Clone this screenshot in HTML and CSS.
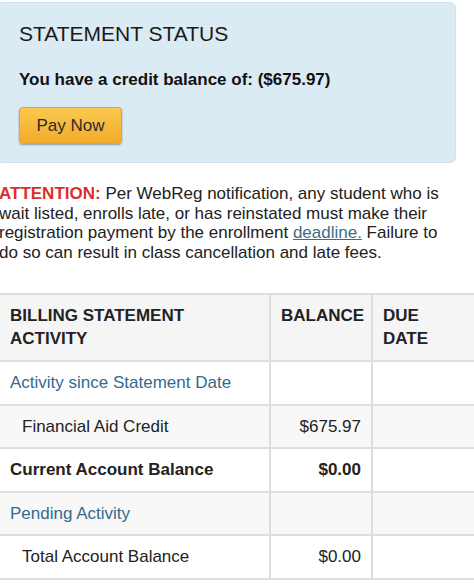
FILE: index.html
```html
<!DOCTYPE html>
<html>

<head>
	<meta charset="UTF-8">
	<title>Statement</title>
	<link rel="stylesheet" href="styles.css">
</head>

<body>
	<div class="status-box">
		<h2 class="status-title">STATEMENT STATUS</h2>
		<p class="credit">You have a credit balance of: ($675.97)</p>
		<button type="button" class="pay-button">Pay Now</button>
	</div>

	<p class="notice">
		<span class="attention">ATTENTION:</span> Per WebReg notification, any student who is
		wait listed, enrolls late, or has reinstated must make their registration payment by
		the enrollment <a href="#">deadline.</a> Failure to do so can result in class
		cancellation and late fees.
	</p>

	<table class="billing">
		<thead>
			<tr>
				<th class="col-activity">BILLING STATEMENT ACTIVITY</th>
				<th class="col-balance">BALANCE</th>
				<th class="col-due">DUE DATE</th>
			</tr>
		</thead>
		<tbody>
			<tr>
				<td class="section">Activity since Statement Date</td>
				<td></td>
				<td></td>
			</tr>
			<tr class="shaded">
				<td class="item">Financial Aid Credit</td>
				<td class="amount">$675.97</td>
				<td></td>
			</tr>
			<tr>
				<td class="total">Current Account Balance</td>
				<td class="amount total">$0.00</td>
				<td></td>
			</tr>
			<tr class="shaded">
				<td class="section">Pending Activity</td>
				<td></td>
				<td></td>
			</tr>
			<tr>
				<td class="item">Total Account Balance</td>
				<td class="amount">$0.00</td>
				<td></td>
			</tr>
		</tbody>
	</table>
</body>

</html>
```

FILE: styles.css
```css
body {
	margin: 0;
	padding-top: 2px;
	font-family: "Liberation Sans", Arial, sans-serif;
	font-size: 17px;
	color: #222;
	overflow: hidden;
}

.status-box {
	width: 436px;
	margin-left: -4px;
	padding: 17px 0 18px 22px;
	background-color: #dbebf4;
	border: 1px solid #cde0eb;
	border-radius: 6px;
}

.status-title {
	margin: 0;
	font-size: 21px;
	font-weight: normal;
	color: #1a1a1a;
	line-height: 28px;
}

.credit {
	margin: 21px 0 0;
	font-weight: bold;
	font-size: 17px;
	color: #111;
	line-height: 22px;
}

.pay-button {
	margin-top: 16px;
	width: 103px;
	height: 37px;
	font-family: "Liberation Sans", Arial, sans-serif;
	font-size: 17px;
	color: #2b2b2b;
	background: linear-gradient(#fbc94f, #f2aa2a);
	border: 1px solid #e6a22c;
	border-radius: 4px;
	box-shadow: 0 1px 2px rgba(0, 0, 0, 0.35);
}

.notice {
	margin: 21px 0 0 -1px;
	width: 446px;
	font-size: 17px;
	line-height: 19.5px;
	color: #222;
}

.attention {
	color: #d9302c;
	font-weight: bold;
}

.notice a {
	color: #3a6d8c;
}

.billing {
	margin-top: 31px;
	width: 476px;
	border-collapse: collapse;
	table-layout: fixed;
}

.billing th,
.billing td {
	border: 2px solid #dedede;
	padding: 10px;
	line-height: 21.5px;
	vertical-align: top;
	text-align: left;
}

.billing tr > :first-child {
	border-left: none;
}

.billing th {
	line-height: 22.5px;
	background-color: #f5f5f5;
	font-weight: bold;
	color: #222;
}

.col-activity {
	width: 249px;
}

.col-balance {
	width: 80px;
}

.section {
	color: #336b8e;
}

.billing td.item {
	padding-left: 22px;
}

.shaded td {
	background-color: #f8f8f8;
}

.billing td.amount {
	text-align: right;
}

.total {
	font-weight: bold;
}
```
